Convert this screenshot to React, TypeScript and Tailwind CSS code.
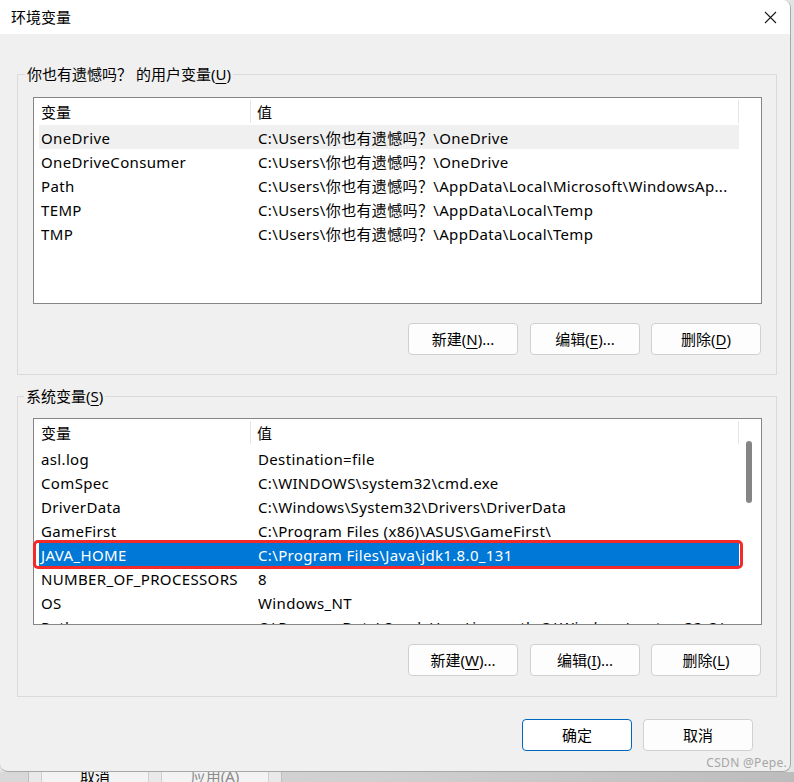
import React from "react";

type Row = { name: string; value: string; hover?: boolean; selected?: boolean };

const userRows: Row[] = [
  { name: "OneDrive", value: "C:\\Users\\你也有遗憾吗？\\OneDrive", hover: true },
  { name: "OneDriveConsumer", value: "C:\\Users\\你也有遗憾吗？\\OneDrive" },
  { name: "Path", value: "C:\\Users\\你也有遗憾吗？\\AppData\\Local\\Microsoft\\WindowsAp..." },
  { name: "TEMP", value: "C:\\Users\\你也有遗憾吗？\\AppData\\Local\\Temp" },
  { name: "TMP", value: "C:\\Users\\你也有遗憾吗？\\AppData\\Local\\Temp" },
];

const sysRows: Row[] = [
  { name: "asl.log", value: "Destination=file" },
  { name: "ComSpec", value: "C:\\WINDOWS\\system32\\cmd.exe" },
  { name: "DriverData", value: "C:\\Windows\\System32\\Drivers\\DriverData" },
  { name: "GameFirst", value: "C:\\Program Files (x86)\\ASUS\\GameFirst\\" },
  { name: "JAVA_HOME", value: "C:\\Program Files\\Java\\jdk1.8.0_131", selected: true },
  { name: "NUMBER_OF_PROCESSORS", value: "8" },
  { name: "OS", value: "Windows_NT" },
  { name: "Path", value: "C:\\ProgramData\\Oracle\\Java\\javapath;C:\\Windows\\system32;C:\\..." },
];

const Key = ({ c }: { c: string }) => (
  <span className="underline underline-offset-[3px] decoration-1">{c}</span>
);

function ListBox({ rows, scroll }: { rows: Row[]; scroll?: boolean }) {
  return (
    <div className="relative">
      <div className="h-[207px] border border-[#868686] bg-white flex overflow-hidden">
        <div className="w-[705px] flex flex-col shrink-0">
          <div className="h-[27px] shrink-0 flex items-center">
            <div className="w-[217px] h-[23px] pl-[7px] flex items-center border-r border-[#e5e5e5]">变量</div>
            <div className="flex-1 h-[23px] pl-[6px] flex items-center border-r border-[#e5e5e5]">值</div>
          </div>
          {rows.map((r, i) => (
            <div
              key={i}
              className={`ml-[5px] h-[24px] pt-[1px] shrink-0 flex items-center whitespace-nowrap tracking-[0.35px] ${
                r.selected ? "bg-[#0078d7] text-white" : r.hover ? "bg-[#f0f0f0]" : ""
              }`}
            >
              <div className="w-[212px] pl-[2px] shrink-0">{r.name}</div>
              <div className="pl-[7px]">{r.value}</div>
            </div>
          ))}
        </div>
        <div className="w-[22px] shrink-0 relative">
          {scroll && <div className="absolute left-[7px] top-[22px] w-[6px] h-[62px] rounded-[3px] bg-[#858585]" />}
        </div>
      </div>
      {rows.some((r) => r.selected) && (
        <div className="absolute left-0 top-[122px] w-[710px] h-[29px] border-[3px] border-[#f42a2a] rounded-[5px]" />
      )}
    </div>
  );
}

function Btn({ children, primary }: { children: React.ReactNode; primary?: boolean }) {
  return (
    <div
      className={`w-[110px] h-[32px] rounded-[4px] border flex items-center justify-center ${
        primary ? "bg-white border-[#0067c0]" : "bg-[#fdfdfd] border-[#d0d0d0]"
      }`}
    >
      {children}
    </div>
  );
}

function ButtonRow({ keys }: { keys: [string, string, string] }) {
  return (
    <div className="mt-[19px] flex justify-end pr-[1px]">
      <Btn>新建(<Key c={keys[0]} />)...</Btn>
      <div className="w-[12px]" />
      <Btn>编辑(<Key c={keys[1]} />)...</Btn>
      <div className="w-[11px]" />
      <Btn>删除(<Key c={keys[2]} />)</Btn>
    </div>
  );
}

export default function App() {
  return (
    <div className="w-[794px] h-[782px] overflow-hidden bg-[#e4e4e4] flex flex-col font-['Noto_Sans','Noto_Sans_CJK_SC',sans-serif] text-[15px] text-black leading-[20px]">
      <div className="relative z-10 w-[791px] h-[772px] shrink-0 bg-[#f0f0f0] border-r border-b border-[#a8a8a8] rounded-tr-[8px] rounded-b-[8px] overflow-hidden flex flex-col">
        {/* title bar */}
        <div className="h-[34px] shrink-0 bg-white flex items-center justify-between pl-[11px] pr-[13px]">
          <span>环境变量</span>
          <svg width="13" height="13" viewBox="0 0 13 13" className="mt-[1px]">
            <path d="M1 1 L12 12 M12 1 L1 12" stroke="#1a1a1a" strokeWidth="1.1" />
          </svg>
        </div>

        <div className="flex flex-col pl-[17px] pr-[13px] pt-[30px]">
          <fieldset className="border border-[#dadada] pl-[15px] pr-[14px] pb-[19px]">
            <legend className="-ml-[8px] px-[2px]">
              你也有遗憾吗？ 的用户变量(<Key c="U" />)
            </legend>
            <div className="mt-[13px]">
              <ListBox rows={userRows} />
            </div>
            <ButtonRow keys={["N", "E", "D"]} />
          </fieldset>

          <fieldset className="mt-[11px] border border-[#dadada] pl-[15px] pr-[14px] pb-[20px]">
            <legend className="-ml-[9px] px-[2px]">
              系统变量(<Key c="S" />)
            </legend>
            <div className="mt-[12px]">
              <ListBox rows={sysRows} scroll />
            </div>
            <ButtonRow keys={["W", "I", "L"]} />
          </fieldset>

          <div className="mt-[22px] flex justify-end gap-[11px] pr-[24px]">
            <Btn primary>确定</Btn>
            <Btn>取消</Btn>
          </div>
        </div>

        <div className="absolute right-[3px] bottom-[1px] text-[12px] leading-[14px] text-[#a6a6a6] tracking-[0.3px]">
          CSDN @Pepe.
        </div>
      </div>

      {/* window underneath */}
      <div className="flex-1 flex items-start bg-gradient-to-r from-[#d8d8d8] via-[#cfcfcf] to-[#bcbcbc] pl-[28px]">
        <div className="h-full flex border-l border-r border-[#bdbdbd] bg-[#e9e9e9] px-[12px] gap-[12px] w-[254px]">
          <div className="w-[110px] h-full border-x border-[#cfcfcf] bg-[#f3f3f3] flex justify-center">
            <span className="-mt-[6px] leading-[20px]">取消</span>
          </div>
          <div className="w-[110px] h-full border-x border-[#cfcfcf] bg-[#f3f3f3] flex justify-center text-[#8a8a8a]">
            <span className="-mt-[6px] leading-[20px]">应用(A)</span>
          </div>
        </div>
      </div>
    </div>
  );
}
